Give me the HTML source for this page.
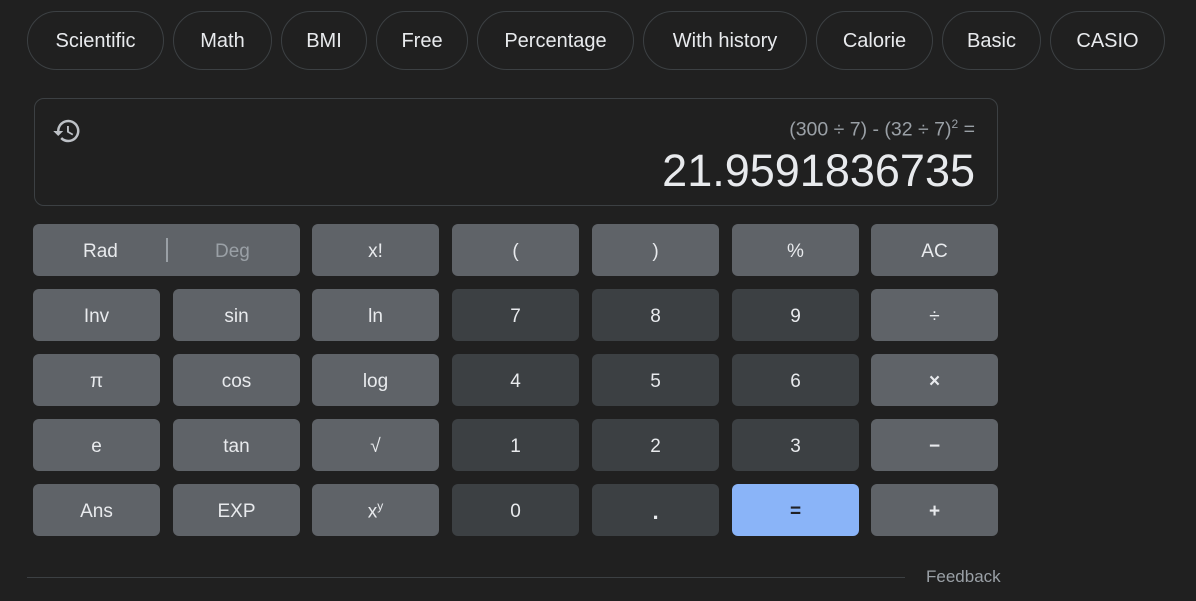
<!DOCTYPE html>
<html><head><meta charset="utf-8"><style>
*{margin:0;padding:0;box-sizing:border-box}
body{width:1196px;height:601px;background:#202020;font-family:"Liberation Sans",Arial,sans-serif;position:relative;overflow:hidden;color:#e8eaed}
.chip{position:absolute;top:11px;height:59px;border:1px solid #3c4043;border-radius:30px;color:#e8eaed;font-size:20px;display:flex;align-items:center;justify-content:center;padding-top:2px}
.b{position:absolute;width:127px;height:52px;border-radius:6px;background:#5f6368;color:#e8eaed;font-size:19px;display:flex;align-items:center;justify-content:center;padding-top:3px}
.n{background:#3c4043}
.eq{background:#8ab4f8;color:#202124;font-weight:bold}
.disp{position:absolute;left:34px;top:98px;width:964px;height:108px;border:1px solid #3c4043;border-radius:10px}
</style></head><body>
<div class="chip" style="left:27px;width:137px">Scientific</div>
<div class="chip" style="left:173px;width:99px">Math</div>
<div class="chip" style="left:281px;width:86px">BMI</div>
<div class="chip" style="left:376px;width:92px">Free</div>
<div class="chip" style="left:477px;width:157px">Percentage</div>
<div class="chip" style="left:643px;width:164px">With history</div>
<div class="chip" style="left:816px;width:117px">Calorie</div>
<div class="chip" style="left:942px;width:99px">Basic</div>
<div class="chip" style="left:1050px;width:115px">CASIO</div>

<div class="disp">
<svg style="position:absolute;left:17px;top:17px" width="30" height="30" viewBox="0 0 24 24"><path fill="#bdc1c6" d="M13 3a9 9 0 0 0-9 9H1l3.89 3.89.07.14L9 12H6c0-3.870 3.13-7 7-7s7 3.13 7 7-3.13 7-7 7c-1.93 0-3.68-.79-4.94-2.06l-1.42 1.42A8.954 8.954 0 0 0 13 21a9 9 0 0 0 0-18zm-1 5v5l4.28 2.54.72-1.21-3.5-2.08V8H12z"/></svg>
<div style="position:absolute;right:22px;top:18px;font-size:19.5px;color:#9aa0a6">(300 ÷ 7) - (32 ÷ 7)<sup style="font-size:12px">2</sup> =</div>
<div style="position:absolute;right:22px;top:46px;font-size:45px;color:#e8eaed">21.9591836735</div>
</div>

<div class="b" style="left:33px;top:224px;width:267px"><span style="position:absolute;left:50px">Rad</span><span style="position:absolute;left:133px;top:14px;width:2px;height:24px;background:#9aa0a6"></span><span style="position:absolute;left:182px;color:#9aa0a6">Deg</span></div>
<div class="b" style="left:312px;top:224px">x!</div>
<div class="b" style="left:452px;top:224px">(</div>
<div class="b" style="left:592px;top:224px">)</div>
<div class="b" style="left:732px;top:224px">%</div>
<div class="b" style="left:871px;top:224px">AC</div>

<div class="b" style="left:33px;top:289px">Inv</div>
<div class="b" style="left:173px;top:289px">sin</div>
<div class="b" style="left:312px;top:289px">ln</div>
<div class="b n" style="left:452px;top:289px">7</div>
<div class="b n" style="left:592px;top:289px">8</div>
<div class="b n" style="left:732px;top:289px">9</div>
<div class="b" style="left:871px;top:289px">÷</div>

<div class="b" style="left:33px;top:354px">π</div>
<div class="b" style="left:173px;top:354px">cos</div>
<div class="b" style="left:312px;top:354px">log</div>
<div class="b n" style="left:452px;top:354px">4</div>
<div class="b n" style="left:592px;top:354px">5</div>
<div class="b n" style="left:732px;top:354px">6</div>
<div class="b" style="left:871px;top:354px;font-weight:bold">×</div>

<div class="b" style="left:33px;top:419px">e</div>
<div class="b" style="left:173px;top:419px">tan</div>
<div class="b" style="left:312px;top:419px">√</div>
<div class="b n" style="left:452px;top:419px">1</div>
<div class="b n" style="left:592px;top:419px">2</div>
<div class="b n" style="left:732px;top:419px">3</div>
<div class="b" style="left:871px;top:419px;font-weight:bold">−</div>

<div class="b" style="left:33px;top:484px">Ans</div>
<div class="b" style="left:173px;top:484px">EXP</div>
<div class="b" style="left:312px;top:484px"><span>x<sup style="font-size:12px">y</sup></span></div>
<div class="b n" style="left:452px;top:484px">0</div>
<div class="b n" style="left:592px;top:484px;font-weight:bold;font-size:22px">.</div>
<div class="b eq" style="left:732px;top:484px">=</div>
<div class="b" style="left:871px;top:484px;font-weight:bold">+</div>

<div style="position:absolute;left:27px;top:577px;width:878px;height:1px;background:#3c4043"></div>
<div style="position:absolute;left:926px;top:567px;font-size:17px;color:#9aa0a6">Feedback</div>
</body></html>
